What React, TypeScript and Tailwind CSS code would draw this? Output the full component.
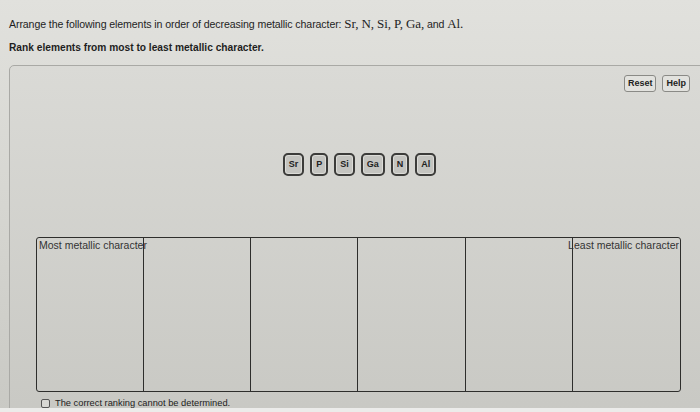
import React from "react";

const tiles = ["Sr", "P", "Si", "Ga", "N", "Al"];

export default function App() {
  return (
    <div
      className="relative w-[700px] h-[412px] overflow-hidden bg-gradient-to-b from-[#e1e1dd] via-[#d6d6d1] to-[#c9c9c4] text-[#1e1e1e]"
      style={{ fontFamily: '"Liberation Sans", Arial, sans-serif' }}
    >
      {/* Question text */}
      <div className="pl-[9px] pt-[17px]">
        <p className="text-[10.6px] leading-[14px] tracking-[-0.1px]">
          Arrange the following elements in order of decreasing metallic character:{" "}
          <span className="text-[13px]" style={{ fontFamily: '"Liberation Serif", "Times New Roman", serif' }}>
            Sr, N, Si, P, Ga,
          </span>{" "}
          and{" "}
          <span className="text-[13px]" style={{ fontFamily: '"Liberation Serif", "Times New Roman", serif' }}>
            Al.
          </span>
        </p>
        <p className="mt-[10px] text-[10.2px] leading-[14px] font-bold">
          Rank elements from most to least metallic character.
        </p>
      </div>

      {/* Drag panel */}
      <div className="ml-[9px] mr-[-8px] mt-[10px] h-[360px] rounded-[5px] border border-[#a9a9a5] bg-gradient-to-b from-[#dadad6] to-[#c8c8c3]">
        <div className="flex justify-end gap-[6px] pt-[9px] pr-[17px]">
          <button className="h-[17px] px-[3px] rounded-[3px] border border-[#8a8a86] bg-[#e2e2de] text-[9px] font-bold leading-none text-[#222]">
            Reset
          </button>
          <button className="h-[17px] px-[3px] rounded-[3px] border border-[#8a8a86] bg-[#e2e2de] text-[9px] font-bold leading-none text-[#222]">
            Help
          </button>
        </div>

        {/* Element tiles */}
        <div className="flex justify-center gap-[6px] mt-[61px] pl-[2px]">
          {tiles.map((t) => (
            <div
              key={t}
              className="h-[23px] min-w-[16px] px-[4px] flex items-center justify-center rounded-[5px] border-2 border-[#3c3c3a] bg-[#c4c4c0] shadow-[inset_0_0_0_1px_#dcdcd8] text-[9px] font-bold text-[#222]"
            >
              {t}
            </div>
          ))}
        </div>

        {/* Ranking box */}
        <div className="relative ml-[26px] mt-[61px] w-[645px] h-[155px] rounded-[3px] border border-[#2e2e2c] grid grid-cols-6">
          {[0, 1, 2, 3, 4, 5].map((i) => (
            <div key={i} className={i < 5 ? "border-r border-[#2e2e2c]" : ""} />
          ))}
          <span className="absolute left-[2px] top-[1px] text-[10.5px] text-[#333] leading-[13px]">
            Most metallic character
          </span>
          <span className="absolute right-[1px] top-[1px] text-[10.5px] text-[#333] leading-[13px]">
            Least metallic character
          </span>
        </div>

        <label className="flex items-center gap-[5px] ml-[31px] mt-[5px]">
          <span className="w-[9px] h-[9px] rounded-[2px] border border-[#555] bg-[#d8d8d4]" />
          <span className="text-[9.3px] text-[#222]">The correct ranking cannot be determined.</span>
        </label>
      </div>

      <div className="absolute left-0 right-0 bottom-0 h-[4px] bg-[#ececea]" />
    </div>
  );
}
